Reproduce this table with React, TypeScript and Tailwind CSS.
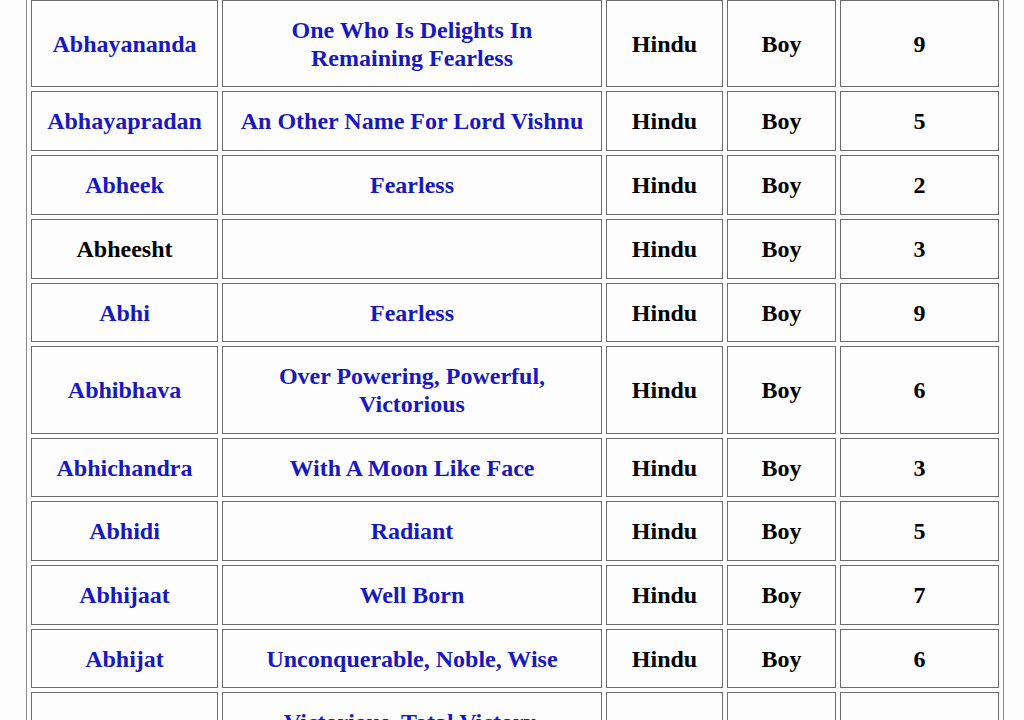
type Row = {
  name: string;
  meaning: string;
  religion: string;
  gender: string;
  number: number;
  link?: boolean;
};

const ROWS: Row[] = [
  { name: "Abhayananda", meaning: "One Who Is Delights In Remaining Fearless", religion: "Hindu", gender: "Boy", number: 9, link: true },
  { name: "Abhayapradan", meaning: "An Other Name For Lord Vishnu", religion: "Hindu", gender: "Boy", number: 5, link: true },
  { name: "Abheek", meaning: "Fearless", religion: "Hindu", gender: "Boy", number: 2, link: true },
  { name: "Abheesht", meaning: "", religion: "Hindu", gender: "Boy", number: 3 },
  { name: "Abhi", meaning: "Fearless", religion: "Hindu", gender: "Boy", number: 9, link: true },
  { name: "Abhibhava", meaning: "Over Powering, Powerful, Victorious", religion: "Hindu", gender: "Boy", number: 6, link: true },
  { name: "Abhichandra", meaning: "With A Moon Like Face", religion: "Hindu", gender: "Boy", number: 3, link: true },
  { name: "Abhidi", meaning: "Radiant", religion: "Hindu", gender: "Boy", number: 5, link: true },
  { name: "Abhijaat", meaning: "Well Born", religion: "Hindu", gender: "Boy", number: 7, link: true },
  { name: "Abhijat", meaning: "Unconquerable, Noble, Wise", religion: "Hindu", gender: "Boy", number: 6, link: true },
  { name: "Abhijay", meaning: "Victorious, Total Victory, Conqueror", religion: "Hindu", gender: "Boy", number: 1, link: true },
  { name: "Abhijeet", meaning: "Victorious", religion: "Hindu", gender: "Boy", number: 6, link: true },
];

const cell = "border border-[#6b6b6b] px-[12px] pt-[16px] pb-[14px] text-center align-middle";

export default function App() {
  return (
    <div className="min-h-screen bg-[#fdfdfd] font-['Liberation_Serif',serif] text-[24px] leading-[27.7px] font-bold text-black">
      <div className="ml-[26px] -mt-[5px] w-[978px]">
        <table className="w-[978px] table-fixed border-separate border-spacing-[4px] border border-[#8a8a8a]">
          <colgroup>
            <col className="w-[187px]" />
            <col className="w-[380px]" />
            <col className="w-[117px]" />
            <col className="w-[109px]" />
            <col className="w-[159px]" />
          </colgroup>
          <tbody>
            {ROWS.map((row) => (
              <tr key={row.name}>
                <td className={`${cell} ${row.link ? "text-[#1818c0]" : "text-black"}`}>{row.name}</td>
                <td className={`${cell} text-[#1818c0]`}>
                  {row.meaning || "\u00a0"}
                </td>
                <td className={cell}>{row.religion}</td>
                <td className={cell}>{row.gender}</td>
                <td className={cell}>{row.number}</td>
              </tr>
            ))}
          </tbody>
        </table>
      </div>
    </div>
  );
}
